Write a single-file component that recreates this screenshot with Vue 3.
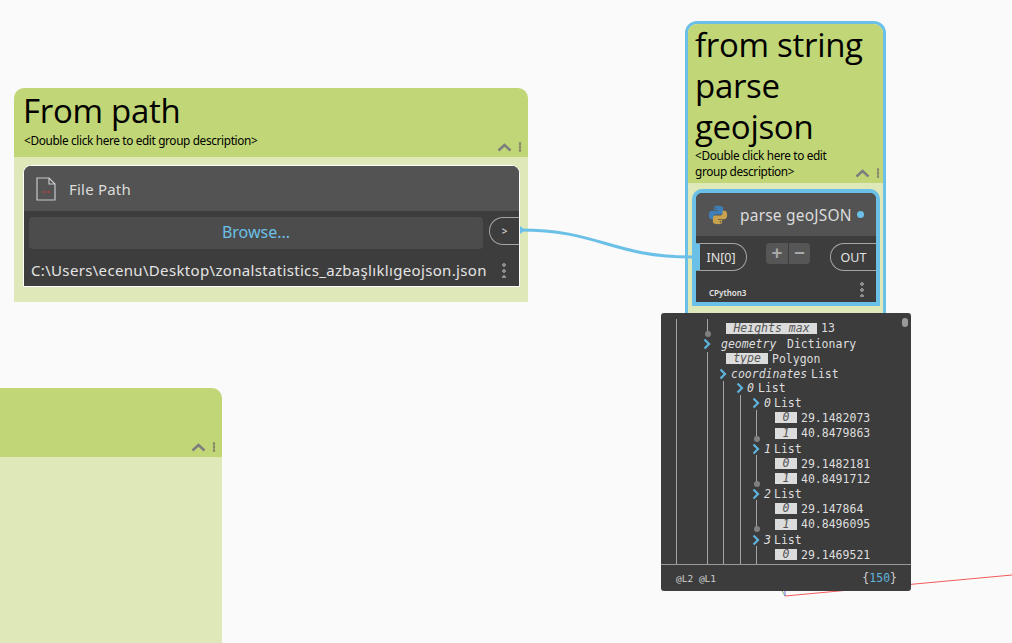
<script setup>
const rows = [
  { i: 726, label: 'Heights_max', lw: 91, val: '13', h: 16 },
  { i: 703, chev: true, key: 'geometry', val: 'Dictionary', keyw: 66, gap: 10, h: 15 },
  { i: 726, label: 'type', lw: 42, val: 'Polygon', h: 15 },
  { i: 719, chev: true, key: 'coordinates', val: 'List', keyw: 80, gap: 4, h: 15 },
  { i: 736, chev: true, key: '0', val: 'List', keyw: 11, gap: 3, h: 14 },
  { i: 752, chev: true, key: '0', val: 'List', keyw: 10, gap: 4, h: 15 },
  { i: 775, label: '0', lw: 22, val: '29.1482073', h: 15 },
  { i: 775, label: '1', lw: 22, val: '40.8479863', h: 16 },
  { i: 752, chev: true, key: '1', val: 'List', keyw: 10, gap: 4, h: 15 },
  { i: 775, label: '0', lw: 22, val: '29.1482181', h: 15 },
  { i: 775, label: '1', lw: 22, val: '40.8491712', h: 15 },
  { i: 752, chev: true, key: '2', val: 'List', keyw: 10, gap: 4, h: 15 },
  { i: 775, label: '0', lw: 22, val: '29.147864', h: 15 },
  { i: 775, label: '1', lw: 22, val: '40.8496095', h: 16 },
  { i: 752, chev: true, key: '3', val: 'List', keyw: 10, gap: 4, h: 15 },
  { i: 775, label: '0', lw: 22, val: '29.1469521', h: 15 }
]
const guides = [
  { x: 15, y: 6, h: 245 },
  { x: 46, y: 6, h: 14 },
  { x: 46, y: 39, h: 212 },
  { x: 62, y: 68, h: 183 },
  { x: 79, y: 82, h: 169 },
  { x: 95, y: 97, h: 28 },
  { x: 95, y: 142, h: 28 },
  { x: 95, y: 187, h: 28 },
  { x: 95, y: 233, h: 18 }
]
const dots = [
  { x: 46, y: 20 },
  { x: 95, y: 125 },
  { x: 95, y: 170 },
  { x: 95, y: 215 }
]
</script>

<template>
  <div class="canvas">
    <svg class="wires" width="1012" height="643" viewBox="0 0 1012 643">
      <path d="M785 596 L1012 575" stroke="#f25a5a" stroke-width="1" fill="none" />
      <path d="M781 589 L785 596" stroke="#7fb56a" stroke-width="1" fill="none" />
      <path d="M785 590 L785 596" stroke="#6a6ae0" stroke-width="1" fill="none" />
    </svg>

    <section class="group g1">
      <header class="g-head">
        <h1>From path</h1>
        <p>&lt;Double click here to edit group description&gt;</p>
        <div class="g-tools">
          <svg width="15" height="9" viewBox="0 0 15 9"><path d="M1.500 7.500 L7.500 2 L13.500 7.500" stroke="#7d7d7d" stroke-width="2.400" fill="none" /></svg>
          <span class="grip"></span>
        </div>
      </header>
      <div class="g-body"></div>
    </section>

    <article class="node n1">
      <div class="n-head">
        <svg class="file" width="20" height="24" viewBox="0 0 20 24">
          <path d="M1 1 H13 L19 7 V23 H1 Z M13 1 V7 H19" stroke="#c9c9c9" stroke-width="1.200" fill="none" />
          <path d="M6 15h2M9 15h2M12 15h2" stroke="#b5423f" stroke-width="1.400" />
        </svg>
        <span class="n-title">File Path</span>
      </div>
      <div class="n-row">
        <div class="browse">Browse...</div>
        <div class="port-out small">&gt;</div>
      </div>
      <div class="path-row">
        <span>C:\Users\ecenu\Desktop\zonalstatistics_azbaşlıklıgeojson.json</span>
        <i class="kebab"></i>
      </div>
    </article>

    <section class="group g2">
      <header class="g-head">
        <h1>from string parse geojson</h1>
        <p>&lt;Double click here to edit group description&gt;</p>
        <div class="g-tools">
          <svg width="15" height="9" viewBox="0 0 15 9"><path d="M1.500 7.500 L7.500 2 L13.500 7.500" stroke="#7d7d7d" stroke-width="2.400" fill="none" /></svg>
          <span class="grip"></span>
        </div>
      </header>
      <div class="g-body"></div>
    </section>

    <article class="node n2">
      <div class="n-head">
        <svg class="py" width="20" height="20" viewBox="0 0 24 24">
          <path fill="#3f7fb8" d="M11.900 1C6.600 1 7 3.300 7 3.300V6h5v1H4.800S1 6.600 1 12s3.300 5.200 3.300 5.200H6.500v-2.600s-.1-3.300 3.200-3.300h5.300s3.100 0 3.100-3V3.900S18.600 1 11.900 1zM9 2.800a1 1 0 1 1 0 2 1 1 0 0 1 0-2z" />
          <path fill="#c9a24e" d="M12.100 23c5.300 0 4.900-2.300 4.900-2.300V18h-5v-1h7.200S23 17.400 23 12s-3.300-5.200-3.300-5.200h-2.200v2.600s.1 3.300-3.200 3.300H9s-3.100 0-3.100 3v4.400S5.400 23 12.100 23zM15 21.200a1 1 0 1 1 0-2 1 1 0 0 1 0 2z" />
        </svg>
        <span class="n-title">parse geoJSON</span>
        <i class="state"></i>
      </div>
      <div class="n2-ports">
        <div class="port-in">IN[0]</div>
        <div class="addrem"><span>+</span><span>−</span></div>
        <div class="port-out">OUT</div>
      </div>
      <div class="n2-foot">
        <span>CPython3</span>
        <i class="kebab"></i>
      </div>
    </article>

    <section class="group g3">
      <header class="g-head">
        <div class="g-tools">
          <svg width="15" height="9" viewBox="0 0 15 9"><path d="M1.500 7.500 L7.500 2 L13.500 7.500" stroke="#7d7d7d" stroke-width="2.400" fill="none" /></svg>
          <span class="grip"></span>
        </div>
      </header>
      <div class="g-body"></div>
    </section>

    <svg class="wires top" width="1012" height="643" viewBox="0 0 1012 643">
      <path d="M520 230 C600 230 610 257 693 257" stroke="#6ac0e7" stroke-width="3" fill="none" />
      <path d="M520 226 L525 230 L520 234 Z" fill="#6ac0e7" />
    </svg>

    <aside class="watch">
      <div class="tree">
        <i v-for="(g, n) in guides" :key="'g' + n" class="guide" :style="{ left: g.x + 'px', top: g.y + 'px', height: g.h + 'px' }"></i>
        <i v-for="(d, n) in dots" :key="'d' + n" class="dot" :style="{ left: d.x + 'px', top: d.y + 'px' }"></i>
        <div v-for="(r, n) in rows" :key="n" class="row" :style="{ paddingLeft: r.i - 661 + 'px', height: r.h + 'px' }">
          <svg v-if="r.chev" class="chev" :style="{ marginRight: r.gap + 'px' }" width="8" height="12" viewBox="0 0 8 12"><path d="M1.500 1.500 L6 6 L1.500 10.500" stroke="#5fb3dd" stroke-width="2.200" fill="none" /></svg>
          <span v-if="r.chev" class="key" :style="{ width: r.keyw + 'px' }">{{ r.key }}</span>
          <span v-if="r.label" class="label" :style="{ width: r.lw + 'px' }">{{ r.label }}</span>
          <span class="val">{{ r.val }}</span>
        </div>
        <i class="thumb"></i>
      </div>
      <footer class="w-foot">
        <span class="levels">@L2 @L1</span>
        <span class="count">{<b>150</b>}</span>
      </footer>
    </aside>
  </div>
</template>

<style scoped>
.canvas {
  position: relative;
  width: 1012px;
  height: 643px;
  overflow: hidden;
  background: #fafafa;
  font-family: "Noto Sans", sans-serif;
}
.wires {
  position: absolute;
  left: 0;
  top: 0;
}
.wires.top {
  z-index: 3;
}
.group {
  position: absolute;
  display: flex;
  flex-direction: column;
  box-sizing: border-box;
  border-radius: 10px 10px 0 0;
  overflow: hidden;
}
.g1 {
  left: 14px;
  top: 88px;
  width: 514px;
  height: 214px;
}
.g2 {
  left: 685px;
  top: 21px;
  width: 201px;
  height: 300px;
  border: 3px solid #6ac0e7;
  border-radius: 12px 12px 0 0;
}
.g3 {
  left: -20px;
  top: 388px;
  width: 242px;
  height: 255px;
}
.g-head {
  position: relative;
  box-sizing: border-box;
  background: #c1d676;
  color: #000;
  padding: 2px 9px 0;
}
.g1 .g-head {
  height: 69px;
}
.g2 .g-head {
  height: 159px;
  padding: 0 7px;
}
.g3 .g-head {
  height: 69px;
}
.g-head h1 {
  margin: 0;
  font-family: "Open Sans", sans-serif;
  font-weight: 400;
  font-size: 33px;
  line-height: 41px;
  letter-spacing: -0.3px;
}
.g2 .g-head h1 {
  width: 180px;
}
.g-head p {
  margin: 0;
  font-size: 11.800px;
  line-height: 16px;
  letter-spacing: -0.35px;
}
.g1 .g-head p {
  margin-top: 1px;
  padding-left: 1px;
}
.g2 .g-head p {
  width: 150px;
}
.g-tools {
  position: absolute;
  right: 6px;
  bottom: 5px;
  display: flex;
  align-items: center;
  gap: 6px;
}
.g2 .g-tools {
  right: 3px;
}
.grip {
  width: 4px;
  height: 10px;
  background: radial-gradient(circle, #8a8a6a 1.300px, transparent 1.600px) 0 0 / 4px 3.400px;
}
.g-body {
  flex: 1;
  background: #dee8b9;
}
.node {
  position: absolute;
  box-sizing: border-box;
  display: flex;
  flex-direction: column;
  background: #3d3d3d;
  color: #e4e4e4;
  overflow: hidden;
}
.n1 {
  left: 23px;
  top: 165px;
  width: 497px;
  height: 122px;
  border: 1px solid #fff;
  border-radius: 8px 8px 0 0;
  z-index: 2;
}
.n2 {
  left: 692px;
  top: 189px;
  width: 188px;
  height: 117px;
  border: 4px solid #6ac0e7;
  border-radius: 10px 10px 0 0;
  z-index: 2;
}
.n-head {
  display: flex;
  align-items: center;
  background: #535353;
  flex: none;
}
.n1 .n-head {
  height: 45px;
  padding-left: 12px;
  gap: 13px;
}
.n2 .n-head {
  height: 43px;
  padding-left: 12px;
  gap: 12px;
}
.n-title {
  font-size: 15.500px;
  letter-spacing: 0.2px;
  color: #dcdcdc;
}
.n1 .n-title {
  font-size: 15px;
}
.state {
  width: 7px;
  height: 7px;
  border-radius: 50%;
  background: #6ac0e7;
  margin-left: -7px;
}
.n-row {
  display: flex;
  align-items: flex-start;
  padding: 6px 0 0 5px;
  gap: 6px;
}
.browse {
  width: 454px;
  height: 32px;
  line-height: 30px;
  border-radius: 4px;
  background: #4c4c4c;
  color: #6ac0e7;
  text-align: center;
  font-size: 16px;
}
.port-out {
  box-sizing: border-box;
  border: 1px solid #a5a5a5;
  border-right: none;
  border-radius: 14px 0 0 14px;
  display: flex;
  align-items: center;
  justify-content: center;
  font-size: 12.500px;
}
.port-out.small {
  width: 30px;
  height: 28px;
  font-size: 10px;
}
.path-row {
  display: flex;
  align-items: center;
  justify-content: space-between;
  padding: 11px 13px 0 7px;
  font-size: 15px;
  letter-spacing: 0.33px;
  white-space: nowrap;
}
.kebab {
  display: block;
  width: 4px;
  height: 16px;
  background: radial-gradient(circle, #8c8c8c 1.700px, transparent 2px) 0 0 / 4px 6px;
}
.n2-ports {
  position: relative;
  display: flex;
  align-items: flex-start;
  padding-top: 7px;
  height: 41px;
  box-sizing: border-box;
}
.port-in {
  box-sizing: border-box;
  width: 51px;
  height: 28px;
  border: 1px solid #a5a5a5;
  border-left: 4px solid #6ac0e7;
  border-radius: 0 14px 14px 0;
  display: flex;
  align-items: center;
  justify-content: center;
  padding-right: 4px;
  font-size: 12.500px;
}
.addrem {
  display: flex;
  gap: 1px;
  margin-left: 19px;
}
.addrem span {
  width: 21px;
  height: 21px;
  background: #565656;
  color: #a8a8a8;
  display: flex;
  align-items: center;
  justify-content: center;
  font-size: 19px;
  font-weight: 700;
  line-height: 1;
}
.addrem span:first-child {
  width: 22px;
  border-radius: 4px 0 0 4px;
}
.addrem span:last-child {
  border-radius: 0 4px 4px 0;
}
.n2 .port-out {
  width: 46px;
  height: 28px;
  margin-left: 20px;
}
.n2-foot {
  display: flex;
  align-items: center;
  justify-content: space-between;
  padding: 0 12px 0 13px;
  flex: 1;
  font-size: 8px;
  font-weight: 600;
}
.n2-foot span {
  margin-top: 6px;
}
.n2-foot .kebab {
  margin-top: -2px;
}
.watch {
  position: absolute;
  left: 661px;
  top: 313px;
  width: 250px;
  height: 278px;
  background: #3c3c3c;
  border-radius: 3px;
  display: flex;
  flex-direction: column;
  z-index: 4;
  font-family: "DejaVu Sans Mono", monospace;
  font-size: 11.500px;
  color: #dedede;
}
.tree {
  position: relative;
  height: 251px;
  box-sizing: border-box;
  padding-top: 7px;
}
.guide {
  position: absolute;
  width: 1px;
  background: #a4a4a4;
}
.dot {
  position: absolute;
  width: 6px;
  height: 6px;
  margin: -2px 0 0 -2.500px;
  border-radius: 50%;
  background: #808080;
}
.row {
  position: relative;
  box-sizing: border-box;
  display: flex;
  align-items: center;
  white-space: nowrap;
}
.chev {
  flex: none;
}
.key {
  flex: none;
  font-style: italic;
  white-space: nowrap;
}
.label {
  flex: none;
  box-sizing: border-box;
  height: 11px;
  line-height: 11px;
  background: #dcdcdc;
  color: #555;
  font-style: italic;
  text-align: center;
  margin-right: 4px;
}
.thumb {
  position: absolute;
  left: 241px;
  top: 5px;
  width: 6px;
  height: 9px;
  border-radius: 3px;
  background: #999;
}
.w-foot {
  flex: none;
  flex-grow: 1;
  box-sizing: border-box;
  border-top: 1px solid #9a9a9a;
  display: flex;
  align-items: center;
  justify-content: space-between;
  padding: 0 14px 0 15px;
}
.levels {
  font-size: 9.500px;
  color: #cfcfcf;
}
.count {
  font-size: 11.500px;
  color: #cfcfcf;
}
.count b {
  font-weight: 400;
  color: #5fb3dd;
}
</style>
